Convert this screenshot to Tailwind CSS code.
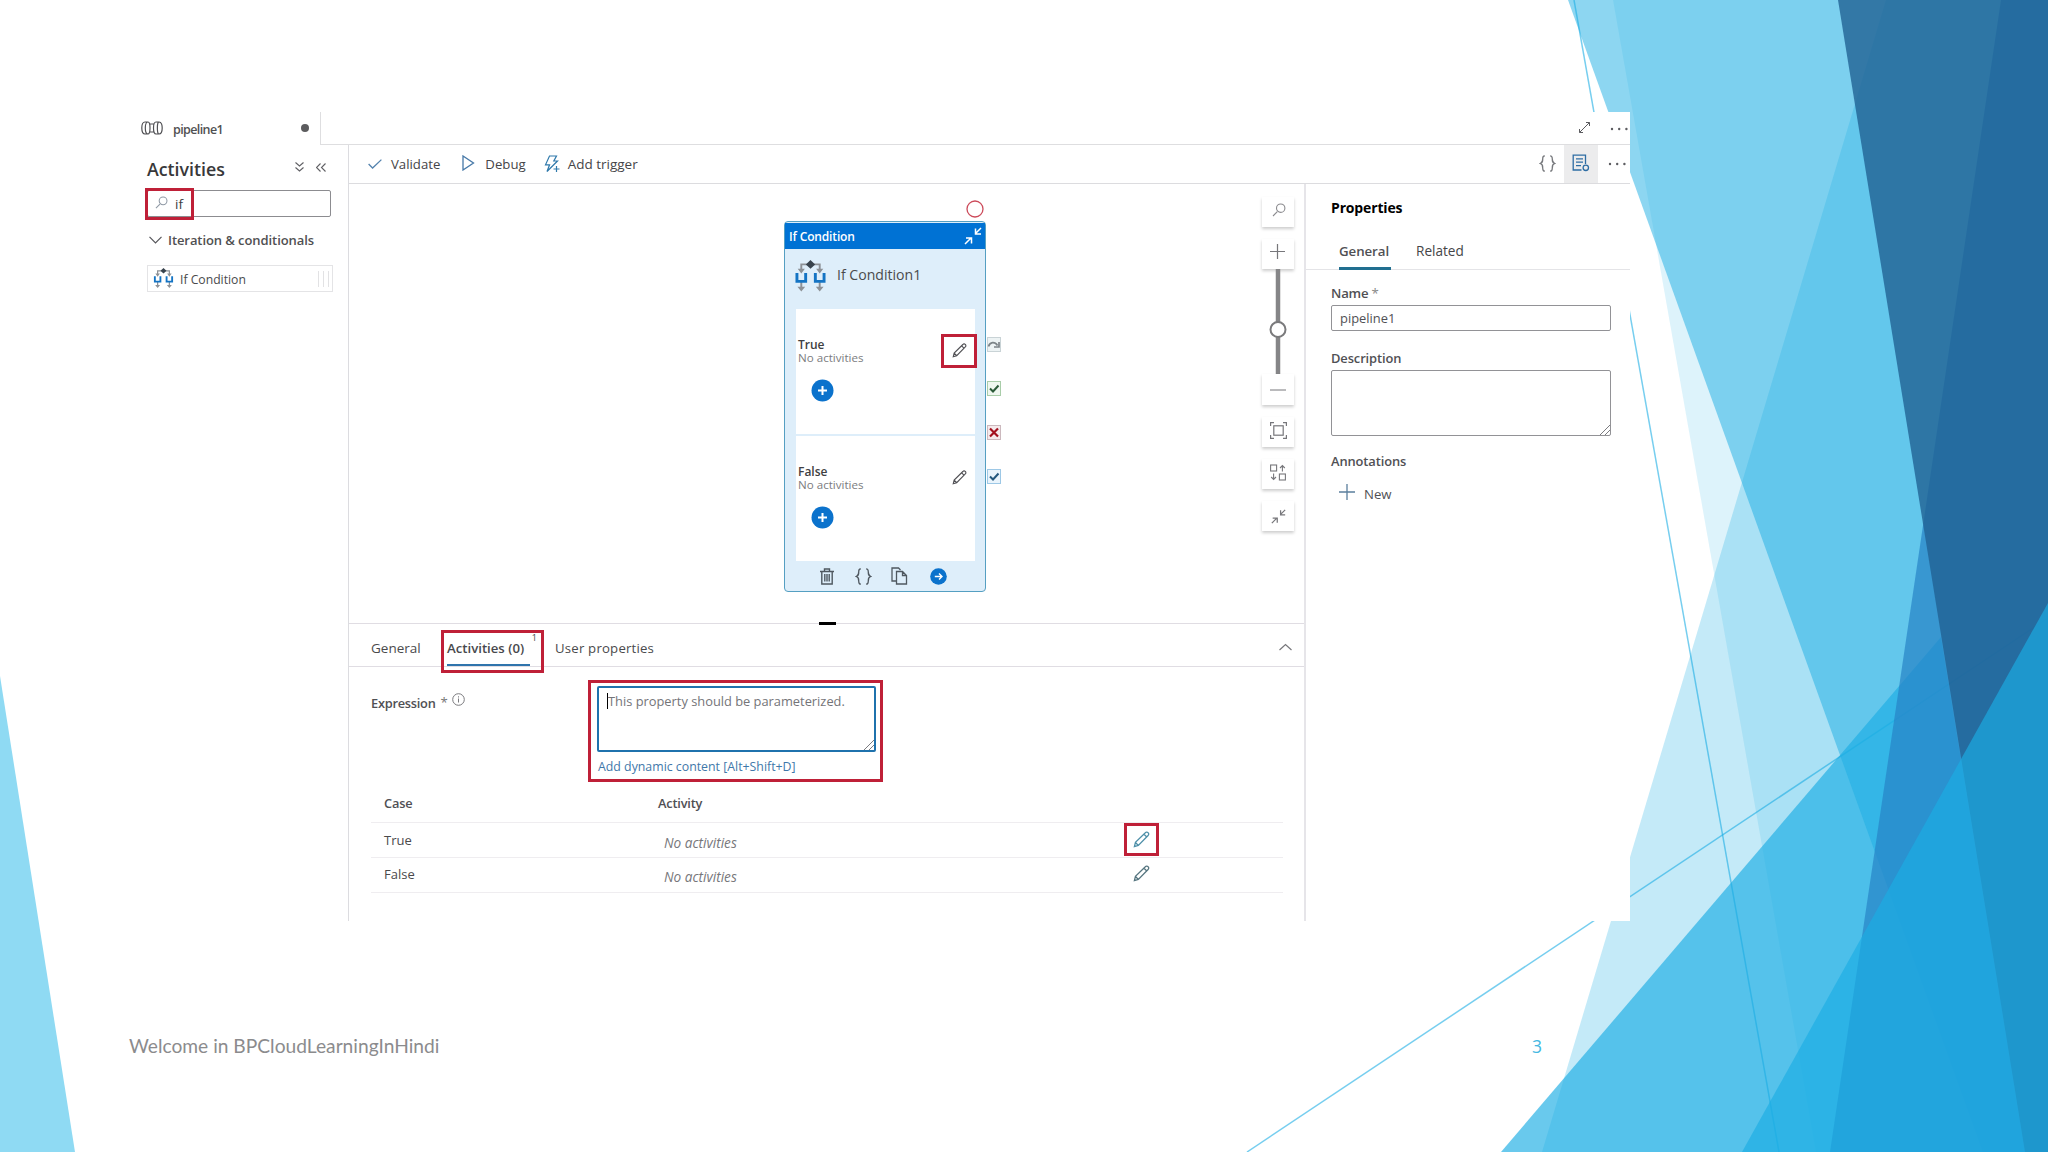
<!DOCTYPE html>
<html lang="en">
<head>
<meta charset="utf-8">
<title>Welcome in BPCloudLearningInHindi</title>
<script src="https://cdn.jsdelivr.net/npm/@tailwindcss/browser@4"></script>
</head>
<body class="relative w-[2048px] h-[1152px] overflow-hidden bg-white font-['Open_Sans',sans-serif] text-[13.2px] leading-4 text-[#4a4a4c]">

<!-- Slide theme shapes -->
<svg class="absolute inset-0" width="2048" height="1152" viewBox="0 0 2048 1152">
  <g stroke="#1cade4" stroke-opacity=".6" stroke-width="1.5">
    <line x1="1574" y1="0" x2="1779" y2="1152"/>
    <line x1="1247" y1="1152" x2="2048" y2="618"/>
  </g>
  <polygon points="1886,0 2048,0 2048,1152 1542,1152" fill="#1cade4" fill-opacity=".26"/>
  <polygon points="1613,0 2048,0 2048,1152 1816,1152" fill="#1cade4" fill-opacity=".15"/>
  <polygon points="1501,1152 1941,637 2025,1152" fill="#1cade4" fill-opacity=".66"/>
  <polygon points="1568,0 2048,0 2048,1152 1983,1152" fill="#1cade4" fill-opacity=".5"/>
  <polygon points="2001,0 2048,0 2048,1152 1830,1152" fill="#2683c6" fill-opacity=".7"/>
  <polygon points="1838,0 2048,0 2048,1152 2025,1152" fill="#216194" fill-opacity=".8"/>
  <polygon points="1742,1152 2048,603 2048,1152" fill="#1cade4" fill-opacity=".66"/>
  <polygon points="0,676 75,1152 0,1152" fill="#8fdaf3"/>
</svg>

<svg class="hidden">
  <symbol id="pencil" viewBox="0 0 16 16"><path d="M1.3 14.7l1-4L11.6 1.6a1.7 1.7 0 0 1 2.6 0a1.7 1.7 0 0 1 0 2.6L5 13.6zM10.3 3l2.7 2.7M2.3 10.8l2.8 2.8" fill="none" stroke="currentColor" stroke-width="1.2"/></symbol>
  <symbol id="search" viewBox="0 0 14 14"><path d="M5.3 8.7L1 13" fill="none" stroke="currentColor" stroke-width="1.1"/><circle cx="8.7" cy="5.2" r="4.2" fill="none" stroke="currentColor" stroke-width="1.1"/></symbol>
  <symbol id="braces" viewBox="0 0 16 16"><path d="M5.5.8C3.5.8 3.5 2 3.5 3.6c0 2.4 0 3.6-2.3 4.4c2.3.8 2.3 2 2.3 4.4c0 1.600 0 2.800 2 2.800M10.500.8c2 0 2 1.200 2 2.800c0 2.400 0 3.600 2.300 4.400c-2.300.8-2.300 2-2.300 4.400c0 1.600 0 2.800-2 2.800" fill="none" stroke="currentColor" stroke-width="1.200"/></symbol>
  <symbol id="branch" viewBox="0 0 32 34"><g fill="none" stroke="#8d9196" stroke-width="2"><path d="M6.500 10V4.500h19V10M6.500 22v8M25.500 22v8"/></g><g fill="#8d9196"><path d="M2.800 9h7.400L6.500 14zM21.800 9h7.400l-3.700 5zM2.500 27.500h8L6.500 32.500zM21.500 27.500h8L25.500 32.500z"/></g><path d="M2 13.500V22h9V13.500M21 13.500V22h9V13.500" fill="none" stroke="#1474c4" stroke-width="3"/><path d="M16 0l4.800 4.500L16 9l-4.800-4.500z" fill="#38434d"/></symbol>
  <symbol id="collapse" viewBox="0 0 18 18"><path d="M1 17l6-6M2 11h5.500v5.500M17 1l-5.500 5.500M11.500 1.500V7h5.500" fill="none" stroke="currentColor" stroke-width="1.500"/></symbol>
  <symbol id="plus" viewBox="0 0 16 16"><path d="M8 0v16M0 8h16" fill="none" stroke="currentColor" stroke-width="1.300"/></symbol>
  <symbol id="grip" viewBox="0 0 10 10"><path d="M0 10L10 0M5 10l5-5" fill="none" stroke="#7b7b7f" stroke-width="1"/></symbol>
</svg>

<main class="absolute left-[130px] top-[112px] flex h-[809px] w-[1500px] flex-col bg-white">

  <!-- Editor tab strip -->
  <div class="flex h-[33px]">
    <div class="flex w-[191px] items-center border-r border-[#dedee0] pl-[11px] pr-[11px]">
      <svg class="mb-px" width="22" height="14" viewBox="0 0 22 14" fill="none" stroke="#505054" stroke-width="1.200"><path d="M7 1H4C1.500 1 .8 4 .8 7s.7 6 3.200 6h3M7 1C5 1 4.300 4 4.300 7S5 13 7 13c1.500 0 2-2.500 2-6S8.500 1 7 1zM15 1c-2 0-2.500 3-2.500 6s.5 6 2.500 6h3c2.500 0 3.200-3 3.200-6S20.500 1 18 1zM17.500 1c-1.500 1.500-1.500 10.500 0 12M9 3h3.800M9 11h3.800"/></svg>
      <span class="ml-[10px] mt-[3px] text-[12.500px] font-semibold tracking-[-0.600px] text-[#505052]">pipeline1</span>
      <i class="mb-px ml-auto size-2 rounded-full bg-[#5c5c5e]"></i>
    </div>
    <div class="flex flex-1 items-center justify-end border-b border-[#dedee0] text-[#5c5c60]">
      <svg class="mb-0.5 mr-[19px]" width="13" height="13" viewBox="0 0 13 13" fill="none" stroke="currentColor" stroke-width="1"><path d="M1.500 11.500l10-10M8 1.500h3.500V5M1.500 8v3.500H5"/></svg>
      <svg class="mr-0.5 mt-0.5" width="18" height="4" fill="currentColor"><circle cx="2" cy="2" r="1.200"/><circle cx="9.200" cy="2" r="1.200"/><circle cx="16.400" cy="2" r="1.200"/></svg>
    </div>
  </div>

  <div class="flex flex-1">

    <!-- Activities sidebar -->
    <aside class="flex w-[218px] flex-col pl-[17px]">
      <div class="flex h-9 items-center pt-3 text-[#606064]">
        <h2 class="text-[17.800px] font-semibold leading-6 text-[#38383a]">Activities</h2>
        <svg class="ml-[70px] mb-1" width="9" height="10" viewBox="0 0 9 10" fill="none" stroke="currentColor" stroke-width="1.100"><path d="M.5.500l4 3.500l4-3.500M.5 5.500l4 3.500l4-3.500"/></svg>
        <svg class="ml-3 mb-1" width="10" height="9" viewBox="0 0 10 9" fill="none" stroke="currentColor" stroke-width="1.100"><path d="M4.500.500l-4 4l4 4M9.500.500l-4 4l4 4"/></svg>
      </div>
      <div class="relative mt-[9px] flex h-[27px] w-[184px] items-center rounded-[2px] border border-[#8c8c90]">
        <svg class="ml-[7px] mb-0.5 text-[#8e98a4]" width="13" height="13"><use href="#search"/></svg>
        <span class="ml-[7px] text-[13.500px] text-[#3c3c3e]">if</span>
        <div class="absolute -left-[3px] -top-[3px] h-8 w-[49px] border-3 border-[#bf2038]"></div>
      </div>
      <div class="mt-[13px] flex h-5 items-center">
        <svg class="ml-0.5" width="13" height="8" viewBox="0 0 13 8" fill="none" stroke="#55555a" stroke-width="1.200"><path d="M.5.800l6 6l6-6"/></svg>
        <span class="ml-[6px] text-[13px] font-semibold tracking-[-0.080px] text-[#505052]">Iteration &amp; conditionals</span>
      </div>
      <div class="mt-[15px] flex h-[27px] w-[186px] items-center border border-[#e4e4e6] pl-[5px]">
        <svg width="21" height="21"><use href="#branch"/></svg>
        <span class="ml-[6px] mt-0.5 text-[12.200px]">If Condition</span>
        <svg class="ml-auto mr-0.5" width="13" height="16" stroke="#e2e2e4"><path d="M1.500 0v16M6.500 0v16M11.500 0v16"/></svg>
      </div>
    </aside>

    <div class="flex flex-1 flex-col border-l border-[#dcdce0]">

      <!-- Toolbar -->
      <div class="flex h-[39px] items-stretch border-b border-[#dcdcdf]">
        <div class="flex items-center pl-[19px] text-[#454548]">
          <svg class="mb-px" width="14" height="10" viewBox="0 0 14 10" fill="none" stroke="#5483ae" stroke-width="1.300"><path d="M.6 5l4 4L13.400.600"/></svg>
          <span class="ml-[9px]">Validate</span>
          <svg class="ml-[22px] mb-0.5" width="13" height="16" viewBox="0 0 13 16" fill="none" stroke="#4779a8" stroke-width="1.300"><path d="M1 1v14l10.500-7z"/></svg>
          <span class="ml-[10px]">Debug</span>
          <svg class="ml-[18px]" width="16" height="18" viewBox="0 0 16 18" fill="none" stroke="#2f79ab" stroke-width="1.200"><path d="M5.500 1h7L9.800 6h3.700L3 16.500L5.600 9.800H1.500zM12.500 11v6M9.500 14h6"/></svg>
          <span class="ml-[8px] text-[13.500px]">Add trigger</span>
        </div>
        <div class="ml-auto flex items-center text-[#77797d]">
          <svg class="mr-[8px] mb-0.5" width="17" height="17"><use href="#braces"/></svg>
          <div class="flex h-full w-[34px] items-center justify-center bg-[#ececed]">
            <svg class="mb-0.5" width="18" height="18" viewBox="0 0 18 18" fill="none" stroke="#2e6da4" stroke-width="1.300"><path d="M9.500 16H1.200V1.200h12.300V10M4 4.800h7M4 8.200h7M4 11.600h5"/><circle cx="13.800" cy="13.800" r="2.700"/></svg>
          </div>
          <svg class="ml-[10px] mr-[4px]" width="18" height="4" fill="#5c5c60"><circle cx="2" cy="2" r="1.200"/><circle cx="9.200" cy="2" r="1.200"/><circle cx="16.400" cy="2" r="1.200"/></svg>
        </div>
      </div>

      <div class="flex flex-1">
        <div class="flex w-[955px] flex-col">

          <!-- Pipeline canvas -->
          <div class="relative h-[439px]">
            <svg class="absolute left-[617px] top-[16px]" width="18" height="18"><circle cx="9" cy="9" r="8" fill="#fff" stroke="#cc4a5a" stroke-width="1.300"/></svg>

            <div class="absolute left-[435px] top-[37px] flex h-[371px] w-[202px] flex-col rounded-sm border-[1.500px] border-[#559fc2] bg-[#deeefa]">
              <div class="mt-px flex h-[26px] items-center bg-[#0072d4] pl-[4px] pr-[3px] text-white">
                <span class="mt-0.5 text-[12px] font-semibold tracking-[-0.150px]">If Condition</span>
                <svg class="ml-auto" width="18" height="18"><use href="#collapse"/></svg>
              </div>
              <div class="flex h-[61px] pl-[10px] pt-[11px]">
                <svg width="31" height="33"><use href="#branch"/></svg>
                <span class="ml-[11px] mt-[7px] text-[14.100px]">If Condition1</span>
              </div>
              <div class="ml-[11px] mr-[10px] flex flex-1 flex-col gap-0.5">
                <div class="relative h-[125px] bg-white pl-0.5 pt-[29px]">
                  <p class="text-[12px] font-semibold leading-[14px] text-[#404042]">True</p>
                  <p class="text-[11.600px] leading-3 text-[#7c7c80]">No activities</p>
                  <svg class="ml-[13px] mt-[15px]" width="23" height="23"><circle cx="11.500" cy="11.500" r="11" fill="#0b72cc"/><path d="M11.500 7v9M7 11.500h9" stroke="#fff" stroke-width="2"/></svg>
                  <svg class="absolute left-[156px] top-[34px] text-[#505054]" width="15" height="15"><use href="#pencil"/></svg>
                  <div class="absolute left-[145px] top-[25px] h-[34px] w-[36px] border-3 border-[#bf2038]"></div>
                </div>
                <div class="relative h-[125px] bg-white pl-0.5 pt-[29px]">
                  <p class="text-[12px] font-semibold leading-[14px] text-[#404042]">False</p>
                  <p class="text-[11.600px] leading-3 text-[#7c7c80]">No activities</p>
                  <svg class="ml-[13px] mt-[15px]" width="23" height="23"><circle cx="11.500" cy="11.500" r="11" fill="#0b72cc"/><path d="M11.500 7v9M7 11.500h9" stroke="#fff" stroke-width="2"/></svg>
                  <svg class="absolute left-[156px] top-[34px] text-[#505054]" width="15" height="15"><use href="#pencil"/></svg>
                </div>
              </div>
              <div class="flex h-[30px] items-center pl-[35px] text-[#4f5860]">
                <svg width="14" height="17" viewBox="0 0 14 17" fill="none" stroke="currentColor" stroke-width="1.400"><path d="M0 3.500h14M4.500 3.500V1h5v2.500M1.800 3.500V16h10.400V3.500M4.800 6v7.500M7 6v7.500M9.200 6v7.500"/></svg>
                <svg class="ml-[21px]" width="17" height="17"><use href="#braces"/></svg>
                <svg class="ml-[19px]" width="17" height="18" viewBox="0 0 17 18" fill="none" stroke="currentColor" stroke-width="1.300"><path d="M5 14H1V1h6.500l2 2M5.500 4.500h6l4 4v8.500h-10zM11.500 4.500v4h4"/></svg>
                <svg class="ml-[22px]" width="17" height="17"><circle cx="8.500" cy="8.500" r="8.300" fill="#0b72cc"/><path d="M4.800 8.500h7M9 5.500l3 3l-3 3" fill="none" stroke="#fff" stroke-width="1.400"/></svg>
              </div>
            </div>

            <!-- Activity output ports -->
            <div class="absolute left-[638px] top-[153px] flex flex-col gap-[29px]">
              <svg width="14" height="15" viewBox="0 0 14 15" fill="none"><rect x=".5" y=".5" width="13" height="14" fill="#edf3f4" stroke="#c9d3d6"/><path d="M1.500 9.500C3 4.500 8 4.500 10.500 8.500M12 5v5H7" stroke="#7c8488" stroke-width="1.700"/></svg>
              <svg width="14" height="15" viewBox="0 0 14 15" fill="none"><rect x=".5" y=".5" width="13" height="14" fill="#eff7ef" stroke="#a9cda9"/><path d="M3 7.500l3 3l5.500-6" stroke="#2b5a38" stroke-width="2"/></svg>
              <svg width="14" height="15" viewBox="0 0 14 15" fill="none"><rect x=".5" y=".5" width="13" height="14" fill="#f5eaec" stroke="#ccb9be"/><path d="M3 3.500l8 8M11 3.500l-8 8" stroke="#a3101e" stroke-width="2.200"/></svg>
              <svg width="14" height="15" viewBox="0 0 14 15" fill="none"><rect x=".5" y=".5" width="13" height="14" fill="#e9f4fc" stroke="#9dc8e6"/><path d="M3 7.500l3 3l5.500-6" stroke="#24587e" stroke-width="2"/></svg>
            </div>

            <!-- Zoom controls -->
            <div class="absolute left-[913px] top-[13px] flex w-8 flex-col items-center text-[#77777b]">
              <div class="flex h-[30px] w-8 items-center justify-center bg-white shadow-[0_2px_3px_rgba(0,0,0,0.200)]"><svg class="mb-1 ml-0.5 text-[#8a8a8e]" width="14" height="14"><use href="#search"/></svg></div>
              <div class="mt-3 flex h-[30px] w-8 items-center justify-center bg-white shadow-[0_2px_3px_rgba(0,0,0,0.200)]"><svg class="mb-[5px] mr-px" width="15" height="15"><use href="#plus"/></svg></div>
              <svg width="18" height="105" viewBox="0 0 18 105"><path d="M9 0v105" stroke="#858587" stroke-width="4.500"/><circle cx="9" cy="60.500" r="7.500" fill="#fff" stroke="#7a7a7c" stroke-width="2"/></svg>
              <div class="flex h-[31px] w-8 items-center justify-center bg-white shadow-[0_2px_3px_rgba(0,0,0,0.200)]"><svg width="16" height="2"><path d="M0 1h16" stroke="currentColor"/></svg></div>
              <div class="mt-3 flex h-[30px] w-8 items-center justify-center bg-white shadow-[0_2px_3px_rgba(0,0,0,0.200)]"><svg class="mb-[3px]" width="17" height="17" viewBox="0 0 17 17" fill="none" stroke="currentColor" stroke-width="1.200"><rect x="3.800" y="3.800" width="9.400" height="9.400"/><path d="M.6 4V.6H4M13 .6h3.400V4M16.400 13v3.400H13M4 16.400H.6V13"/></svg></div>
              <div class="mt-3 flex h-[30px] w-8 items-center justify-center bg-white shadow-[0_2px_3px_rgba(0,0,0,0.200)]"><svg class="mb-[3px]" width="16" height="17" viewBox="0 0 16 17" fill="none" stroke="currentColor" stroke-width="1.100"><rect x=".6" y="1" width="6" height="6"/><rect x="9.400" y="10" width="6" height="6"/><path d="M12.400 7.500V1.500M10 4l2.400-2.500L14.800 4M3.600 9.500v6M1.200 13l2.400 2.500L6 13"/></svg></div>
              <div class="mt-3 flex h-[30px] w-8 items-center justify-center bg-white shadow-[0_2px_3px_rgba(0,0,0,0.200)]"><svg width="15" height="15"><use href="#collapse"/></svg></div>
            </div>
            <div class="absolute left-[470px] top-[438px] h-[3px] w-[17px] bg-black"></div>
          </div>

          <!-- Activity settings -->
          <div class="flex h-[44px] border-y border-[#e0dde3] pl-[22px] pr-3">
            <div class="flex w-[50px] items-center pt-[5px] text-[13.500px]">General</div>
            <div class="relative ml-[26px] flex w-[83px] items-center whitespace-nowrap border-b-2 border-[#2f74ac] pt-[7px] text-[13.200px] font-semibold text-[#48484c]">Activities (0)
              <span class="absolute -right-[7px] top-[6px] text-[9px] font-normal leading-4 text-[#444]">1</span>
              <div class="absolute -left-[6px] top-[6px] h-[43px] w-[103px] border-3 border-[#bf2038]"></div>
            </div>
            <div class="ml-[25px] flex items-center pt-[5px]"><span class="tracking-[0.200px]">User properties</span></div>
            <svg class="mb-auto ml-auto mt-[19px]" width="13" height="8" viewBox="0 0 13 8" fill="none" stroke="#77777b" stroke-width="1.200"><path d="M.5 7l6-5.500l6 5.500"/></svg>
          </div>

          <div class="flex h-[116px] pl-[22px]">
            <div class="flex w-[217px] pt-[26px]">
              <span class="mt-[2px] text-[12.800px] font-semibold tracking-[-0.250px] text-[#505054]">Expression</span><span class="ml-[5px] mt-px text-[#777]">*</span>
              <svg class="ml-[4px]" width="13" height="13" viewBox="0 0 13 13" fill="none" stroke="#7a7a7e"><circle cx="6.500" cy="6.500" r="5.800"/><path d="M6.500 5.500v4M6.500 3.300v1.200"/></svg>
            </div>
            <div class="mt-[13px] h-[102px] w-[295px] border-3 border-[#bf2038] pl-[6px] pt-[3px]">
              <div class="relative h-[66px] w-[279px] rounded-[2px] border-2 border-[#1f72ad] pl-[8px] pt-[5px]">
                <p class="border-l border-black text-[12.850px] text-[#747478]">This property should be parameterized.</p>
                <svg class="absolute bottom-0 right-0" width="10" height="10"><use href="#grip"/></svg>
              </div>
              <p class="ml-px mt-[7px] text-[12.330px] text-[#3f78aa]">Add dynamic content [Alt+Shift+D]</p>
            </div>
          </div>

          <div class="ml-[22px] w-[912px]">
            <div class="grid h-[40px] grid-cols-[274px_1fr] border-b border-[#efedf0] pl-[13px] pt-[12px] text-[12.800px] font-semibold tracking-[-0.200px] text-[#505054]"><span>Case</span><span>Activity</span></div>
            <div class="relative grid h-[35px] grid-cols-[280px_469px_1fr] border-b border-[#efedf0] pl-[13px] pt-[9px]"><span class="text-[13px]">True</span><span class="mt-[3px] text-[13.600px] italic text-[#77777b]">No activities</span><svg class="-mt-px text-[#4d8fa8]" width="17" height="17"><use href="#pencil"/></svg>
              <div class="absolute left-[753px] top-0 h-[33px] w-[35px] border-3 border-[#bf2038]"></div></div>
            <div class="grid h-[35px] grid-cols-[280px_469px_1fr] border-b border-[#efedf0] pl-[13px] pt-[8px]"><span class="text-[13px]">False</span><span class="mt-[3px] text-[13.600px] italic text-[#77777b]">No activities</span><svg class="-mt-px text-[#55757f]" width="17" height="17"><use href="#pencil"/></svg></div>
          </div>
        </div>

        <!-- Properties pane -->
        <section class="flex-1 border-l-2 border-[#e6e5e9] text-[#454548]">
          <h3 class="pl-[25px] pt-4 text-[14px] font-bold tracking-[-0.150px] text-black">Properties</h3>
          <div class="mt-[17px] flex h-[37px] items-stretch border-b border-[#e4e4e7] pl-[33px]">
            <span class="-mb-px w-[52px] border-b-3 border-[#216f90] pt-[10px] text-[13.300px] font-semibold tracking-[-0.080px] text-[#505054]">General</span>
            <span class="ml-[25px] pt-[10px] text-[13.600px]">Related</span>
          </div>
          <div class="w-[305px] pl-[25px] text-[#505054]">
            <p class="mt-[15px] font-semibold tracking-[-0.200px]">Name <span class="font-normal text-[#888]">*</span></p>
            <div class="mt-1 h-[26px] rounded-[2px] border-[1.500px] border-[#929296] pl-2 pt-[4px] text-[12.900px]">pipeline1</div>
            <p class="mt-[19px] text-[12.900px] font-semibold tracking-[-0.100px]">Description</p>
            <div class="relative mt-1 h-[66px] rounded-[2px] border-[1.500px] border-[#929296]"><svg class="absolute bottom-0 right-0" width="10" height="10"><use href="#grip"/></svg></div>
            <p class="mt-[17px] text-[12.900px] font-semibold tracking-[-0.100px]">Annotations</p>
            <div class="mt-[15px] flex items-center pl-2"><svg class="mb-[3px] text-[#5b7f9d]" width="16" height="16"><use href="#plus"/></svg><span class="ml-[9px]">New</span></div>
          </div>
        </section>
      </div>
    </div>
  </div>
</main>

<footer class="absolute left-[129px] top-[1032px] flex w-[1413px] items-center justify-between font-['Lato',sans-serif] text-[19.200px] leading-7 text-[#8b8b8d]">
  <span>Welcome in BPCloudLearningInHindi</span>
  <span class="font-['Open_Sans',sans-serif] text-[17.500px] text-[#45b8e2]">3</span>
</footer>
</body>
</html>
